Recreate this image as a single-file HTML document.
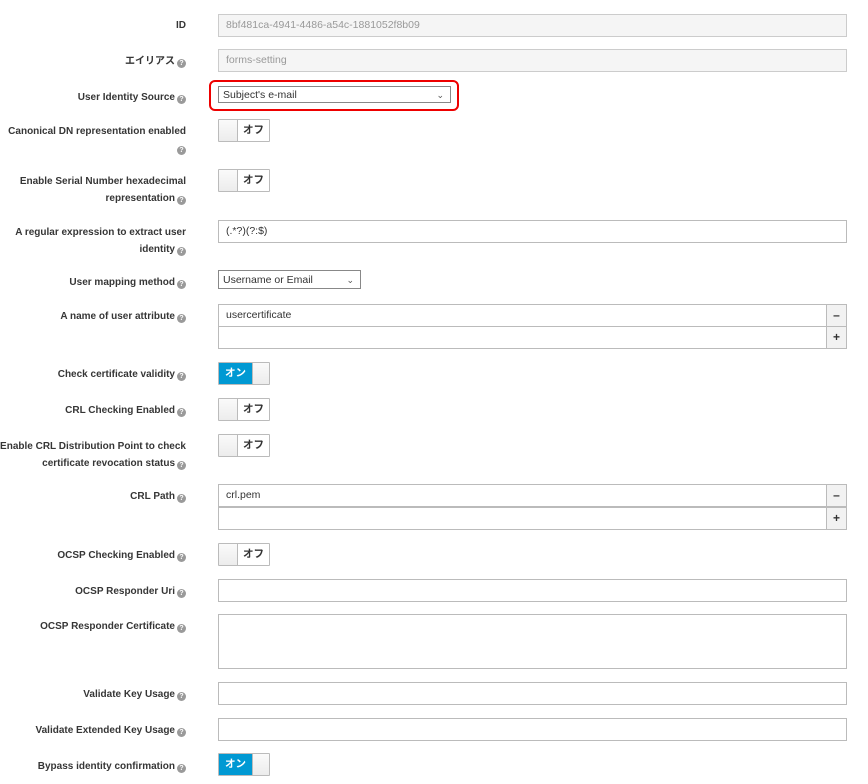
<!DOCTYPE html>
<html><head><meta charset="utf-8"><style>
body{margin:0;width:868px;height:784px;background:#fff;font-family:"Liberation Sans","Noto Sans CJK JP",sans-serif;font-size:10.5px;color:#333;position:relative;overflow:hidden}
.l{position:absolute;right:682px;text-align:right;font-weight:bold;font-size:10px;line-height:17px;white-space:nowrap;color:#363636;margin-top:1px}
.q{display:inline-block;width:9px;height:9px;border-radius:50%;background:#9a9a9a;color:#fff;font-size:7px;line-height:9px;text-align:center;vertical-align:-1px;margin-left:2px;font-weight:bold}
.i{position:absolute;left:218px;height:21px;border:1px solid #bbb;background:#fff;line-height:21px;padding-left:7px;box-sizing:content-box;width:620px;white-space:nowrap}
.ro{background:#f5f5f5;color:#999;border-color:#ccc}
.t{position:absolute;left:218px;width:50px;height:21px;border:1px solid #bbb;background:#fff;border-radius:1px;overflow:hidden}
.t .k{position:absolute;left:0;top:0;width:18px;height:21px;background:linear-gradient(#fafafa,#ececec);border-right:1px solid #bbb}
.t .x{position:absolute;left:19px;top:0;width:31px;line-height:21px;text-align:center;font-weight:bold;color:#333}
.t.on .b{position:absolute;left:0;top:0;width:33px;height:21px;background:#0099d3;color:#fff;font-weight:bold;line-height:21px;text-align:center}
.t.on .k{left:33px;border-right:0;border-left:1px solid #bbb;width:16px}
.btn{position:absolute;left:826px;width:19px;height:21px;border:1px solid #bbb;background:#f2f2f2;text-align:center;line-height:21px;font-weight:bold;font-size:12px}
</style></head><body>

<div class="l" style="top:16px">ID</div>
<div class="i ro" style="top:14px">8bf481ca-4941-4486-a54c-1881052f8b09</div>

<div class="l" style="top:52px">エイリアス<span class="q">?</span></div>
<div class="i ro" style="top:49px">forms-setting</div>

<div class="l" style="top:88px">User Identity Source<span class="q">?</span></div>
<div style="position:absolute;left:209px;top:80px;width:246px;height:27px;border:2px solid #e00;border-radius:6px"></div>
<div style="position:absolute;left:218px;top:86px;height:17px;border:1px solid #888;line-height:17px;padding-left:4px;box-sizing:border-box;width:233px">Subject's e-mail<span style="position:absolute;right:6px;top:0;font-size:9px;color:#555">&#8964;</span></div>

<div class="l" style="top:122px">Canonical DN representation enabled<br><span class="q">?</span></div>
<div class="t" style="top:119px"><div class="k"></div><div class="x">オフ</div></div>

<div class="l" style="top:172px">Enable Serial Number hexadecimal<br>representation<span class="q">?</span></div>
<div class="t" style="top:169px"><div class="k"></div><div class="x">オフ</div></div>

<div class="l" style="top:223px">A regular expression to extract user<br>identity<span class="q">?</span></div>
<div class="i" style="top:220px">(.*?)(?:$)</div>

<div class="l" style="top:273px">User mapping method<span class="q">?</span></div>
<div style="position:absolute;left:218px;top:270px;width:143px;height:19px;border:1px solid #888;line-height:18px;padding-left:4px;box-sizing:border-box">Username or Email<span style="position:absolute;right:6px;top:0;font-size:9px;color:#555">&#8964;</span></div>

<div class="l" style="top:307px">A name of user attribute<span class="q">?</span></div>
<div class="i" style="top:304px;width:601px">usercertificate</div><div class="btn" style="top:304px">&#8211;</div>
<div class="i" style="top:326px;width:601px"></div><div class="btn" style="top:326px">+</div>

<div class="l" style="top:365px">Check certificate validity<span class="q">?</span></div>
<div class="t on" style="top:362px"><div class="b">オン</div><div class="k"></div></div>

<div class="l" style="top:401px">CRL Checking Enabled<span class="q">?</span></div>
<div class="t" style="top:398px"><div class="k"></div><div class="x">オフ</div></div>

<div class="l" style="top:437px">Enable CRL Distribution Point to check<br>certificate revocation status<span class="q">?</span></div>
<div class="t" style="top:434px"><div class="k"></div><div class="x">オフ</div></div>

<div class="l" style="top:487px">CRL Path<span class="q">?</span></div>
<div class="i" style="top:484px;width:601px">crl.pem</div><div class="btn" style="top:484px">&#8211;</div>
<div class="i" style="top:507px;width:601px"></div><div class="btn" style="top:507px">+</div>

<div class="l" style="top:546px">OCSP Checking Enabled<span class="q">?</span></div>
<div class="t" style="top:543px"><div class="k"></div><div class="x">オフ</div></div>

<div class="l" style="top:582px">OCSP Responder Uri<span class="q">?</span></div>
<div class="i" style="top:579px"></div>

<div class="l" style="top:617px">OCSP Responder Certificate<span class="q">?</span></div>
<div class="i" style="top:614px;height:53px"></div>

<div class="l" style="top:685px">Validate Key Usage<span class="q">?</span></div>
<div class="i" style="top:682px"></div>

<div class="l" style="top:721px">Validate Extended Key Usage<span class="q">?</span></div>
<div class="i" style="top:718px"></div>

<div class="l" style="top:757px">Bypass identity confirmation<span class="q">?</span></div>
<div class="t on" style="top:753px"><div class="b">オン</div><div class="k"></div></div>

</body></html>
